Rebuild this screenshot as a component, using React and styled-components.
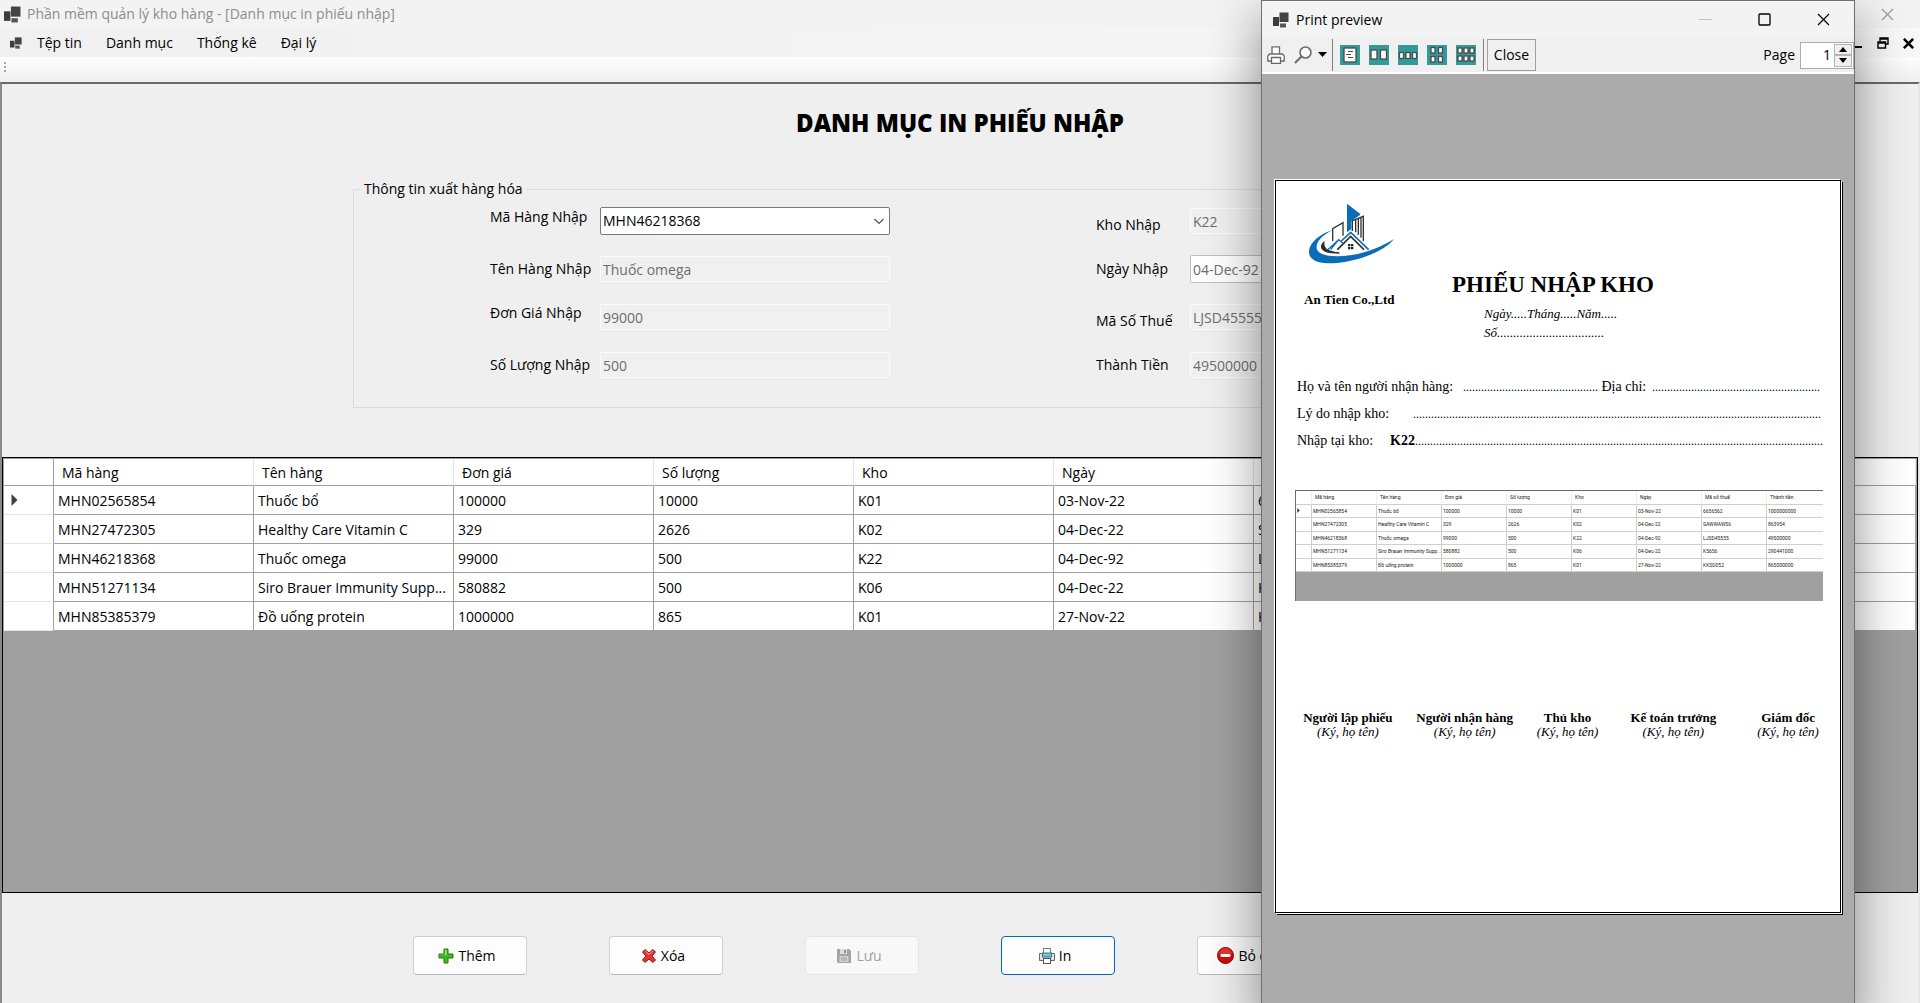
import React from 'react';
import styled, { createGlobalStyle, css } from 'styled-components';

const UI_FONT = '"Open Sans", "Noto Sans", sans-serif';
const DOC_FONT = '"Liberation Serif", "Times New Roman", serif';

const GlobalStyle = createGlobalStyle`
  *, *::before, *::after { box-sizing: border-box; }
  body { margin: 0; background: #f0f0f0; overflow: hidden; }
  button, input, select { font: inherit; color: inherit; margin: 0; }
`;

/* ---------- main window ---------- */

const Desktop = styled.div`
  position: relative;
  height: 100vh;
  overflow: hidden;
  display: flex;
  flex-direction: column;
  background: #efefef;
  color: #000;
  font: 14px/20px ${UI_FONT};
`;

const TitleBar = styled.header`
  flex: none;
  display: flex;
  align-items: center;
  gap: 6px;
  height: 28px;
  padding: 0 26px 0 4px;
  background: #f3f3f3;
  color: #8c8c8c;
`;

const TitleText = styled.span`
  flex: 1;
`;

const MenuBar = styled.nav`
  flex: none;
  display: flex;
  align-items: center;
  height: 29px;
  padding: 1px 6px 0 10px;
  background: linear-gradient(90deg, #f0f0f0, #f8f8f8);
`;

const MenuItems = styled.div`
  flex: 1;
  display: flex;
  gap: 24px;
  padding-left: 15px;
`;

const PlainButton = styled.button`
  display: inline-flex;
  align-items: center;
  justify-content: center;
  padding: 0;
  border: 0;
  background: none;
`;

const MdiControls = styled.div`
  display: flex;
  align-items: center;
  gap: 14px;
`;

const ToolStrip = styled.div`
  flex: none;
  height: 25px;
  padding: 5px 4px;
  background: linear-gradient(#fdfdfd, #f0f0f0);
  border-bottom-right-radius: 4px;
`;

const Grip = styled.div`
  width: 2px;
  height: 11px;
  background: repeating-linear-gradient(#a8a8a8 0 2px, transparent 2px 4px);
`;

const Child = styled.main`
  flex: 1;
  min-height: 0;
  display: flex;
  flex-direction: column;
  border: solid;
  border-width: 2px 2px 0;
  border-color: #696969 #e6e6e6 #e6e6e6 #8a8a8a;
`;

const FormArea = styled.section`
  flex: none;
  display: flex;
  flex-direction: column;
  align-items: center;
  height: 373px;
`;

const Heading = styled.h1`
  margin: 23px 0 40px;
  font-size: 24px;
  line-height: 32px;
  font-weight: 800;
`;

const Group = styled.fieldset`
  display: flex;
  gap: 206px;
  width: 1214px;
  margin: 0;
  padding: 8px 0 28px 136px;
  border: 1px solid #dcdcdc;

  legend {
    margin-left: -130px;
    padding: 0 4px;
  }
`;

const FieldColumn = styled.div`
  display: flex;
  flex-direction: column;
  gap: 20px;
`;

const Field = styled.div`
  display: grid;
  grid-template-columns: ${p => p.$label}px 290px;
  align-items: center;
  height: 28px;

  label { align-self: ${p => p.$align || 'center'}; }
`;

const TextBox = styled.input`
  width: 100%;
  height: 26px;
  padding: 0 2px;
  border: 1px solid #fbfbfb;
  border-radius: 2px;
  background: #f0f0f0;
  color: #6d6d6d;

  ${p => p.$date && css`
    height: 28px;
    background: #fff;
    border-color: #bfbfbf;
  `}
`;

const Combo = styled.div`
  display: grid;
  align-items: center;

  select, svg { grid-area: 1 / 1; }
  svg { justify-self: end; margin-right: 6px; pointer-events: none; }
`;

const Select = styled.select`
  appearance: none;
  width: 100%;
  height: 28px;
  padding: 0 2px;
  border: 1px solid #7a7a7a;
  border-radius: 2px;
  background: #fff;
`;

/* ---------- data grid ---------- */

const GridFrame = styled.section`
  flex: 1;
  min-height: 0;
  padding: 1px;
  border: 1px solid #000;
  background: #a0a0a0;
  overflow: hidden;
`;

const DataTable = styled.table`
  width: 100%;
  table-layout: fixed;
  border-spacing: 0;
  background: #fff;
  text-align: left;

  th, td {
    padding: 2px 4px 0;
    height: 29px;
    border: solid #a0a0a0;
    border-width: 0 1px 1px 0;
    font-weight: 400;
    white-space: nowrap;
    overflow: hidden;
  }
  thead th {
    height: 27px;
    padding: 2px 8px 0;
    border-right-color: #e5e5e5;
  }
  thead th:first-child { border-right-color: #a0a0a0; }
  tbody th { border-bottom-color: #e5e5e5; padding: 0 7px; }
  svg { display: block; }
`;

const ButtonBar = styled.footer`
  flex: none;
  display: flex;
  justify-content: center;
  align-items: flex-start;
  gap: 82px;
  height: 110px;
  padding-top: 43px;
`;

const ActionButton = styled.button`
  display: flex;
  align-items: center;
  justify-content: center;
  gap: 4px;
  width: 114px;
  height: 39px;
  padding: 0 6px 0 0;
  border: 1px solid ${p => (p.$active ? '#0067c0' : '#d0d0d0')};
  border-bottom-color: ${p => (p.$active ? '#0067c0' : '#b8b8b8')};
  border-radius: 4px;
  background: #fdfdfd;

  &:disabled {
    border-color: #e5e5e5;
    background: #f8f8f8;
    color: #a0a0a0;
  }
`;

/* ---------- print preview window ---------- */

const PreviewWindow = styled.section`
  position: absolute;
  top: 0;
  right: 65px;
  bottom: -16px;
  width: 594px;
  display: flex;
  flex-direction: column;
  border: 1px solid #707070;
  background: #f0f0f0;
  box-shadow: 0 18px 50px rgba(0, 0, 0, 0.45);
`;

const PreviewTitle = styled.header`
  flex: none;
  display: flex;
  align-items: center;
  gap: 7px;
  height: 37px;
  padding: 0 24px 0 11px;
  background: #f3f3f3;
`;

const WindowControls = styled.div`
  display: flex;
  align-items: center;
  gap: 46px;
  margin-left: auto;
`;

const PreviewTools = styled.div`
  flex: none;
  display: flex;
  align-items: center;
  height: 36px;
  padding-left: 4px;
  border-bottom: 2px solid #fdfdfd;
`;

const ToolGroup = styled.div`
  display: flex;
  align-items: center;
  gap: ${p => p.$gap}px;
  height: 32px;
  padding: 0 ${p => p.$pad}px;
  border-right: 1px solid #808080;
`;

const CloseButton = styled.button`
  width: 49px;
  height: 32px;
  margin-left: 3px;
  padding: 0;
  border: 1px solid #a0a0a0;
  background: #f0f0f0;
`;

const PageBox = styled.div`
  display: flex;
  align-items: center;
  margin-left: auto;
  gap: 5px;
`;

const Spinner = styled.div`
  display: flex;
  width: 54px;
  height: 27px;
  padding: 1px;
  border: 1px solid #ababb3;
  background: #fff;
`;

const PageInput = styled.input`
  flex: 1;
  min-width: 0;
  padding: 0 3px;
  border: 0;
  text-align: right;
  background: #fff;
`;

const SpinButtons = styled.div`
  display: flex;
  flex-direction: column;
  width: 18px;

  button {
    flex: 1;
    border: 1px solid #b5b5b5;
    background: #f0f0f0;
  }
`;

const PreviewCanvas = styled.div`
  flex: 1;
  display: flex;
  align-items: center;
  justify-content: center;
  background: #ababab;
`;

const Sheet = styled.article`
  width: 566px;
  height: 733px;
  padding: 22px 17px 0 19px;
  border: 1px solid #000;
  background: #fff;
  box-shadow: 1px 1px 0 #fff, -1px -1px 0 #fff, 2px 2px 0 #000;
  font: 14px/16px ${DOC_FONT};
`;

const SheetHead = styled.div`
  display: flex;
  gap: 56px;
  padding-left: 9px;
  height: 176px;
`;

const Company = styled.div`
  width: 92px;
  font-size: 13px;
  font-weight: 700;

  svg { display: block; margin: 0 0 27px 4px; }
`;

const DocTitle = styled.div`
  padding-top: 68px;

  h2 { margin: 0 0 7px; font-size: 23px; line-height: 28px; }
  p { margin: 0 0 3px 32px; font-size: 13px; font-style: italic; }
`;

const DocLine = styled.p`
  display: flex;
  margin: 0 0 11px 2px;
`;

const DocLabel = styled.span`
  flex: none;
  width: ${p => p.$width}px;
  white-space: nowrap;
`;

const Dots = styled.span`
  flex: none;
  font-size: 12px;
`;

const MiniFrame = styled.div`
  margin: 41px 0 110px;
  padding-bottom: 29px;
  border: solid #6b6b6b;
  border-width: 1px 0 0 1px;
  background: #a0a0a0;
  font-family: Roboto, sans-serif;
  color: #222;

  table {
    width: 100%;
    table-layout: fixed;
    border-spacing: 0;
    background: #fff;
    text-align: left;
  }
  th, td {
    height: 13px;
    padding: 0 0 0 1px;
    border: solid #cfcfcf;
    border-width: 0 1px 1px 0;
    font-size: 5px;
    line-height: 8px;
    font-weight: 400;
    white-space: nowrap;
  }
  tbody tr:nth-child(even) > * { height: 14px; }
  thead th { padding: 0 3px; height: 14px; border-right-color: #eee; }
  tr > :last-child { border-right: 0; }
  svg { display: block; }
`;

const Signatures = styled.div`
  display: grid;
  grid-template-columns: 106fr 128fr 78fr 134fr 96fr;
  margin-right: -13px;
  text-align: center;
  font-size: 13px;
  line-height: 14px;

  strong { display: block; white-space: nowrap; }
  em { display: block; }
`;

/* ---------- drawings ---------- */

const AppIcon = ({ size }) => (
  <svg width={size} height={size} viewBox="0 0 16 16" aria-hidden="true">
    <rect x="0" y="5" width="6" height="9" fill="#3c3c3c" />
    <rect x="6.5" y="0.5" width="9" height="9.5" fill="#444" />
    <rect x="7" y="11.5" width="6" height="4" fill="#555" />
  </svg>
);

const CloseGlyph = ({ color, width = 1.2, size = 13 }) => (
  <svg width={size} height={size} viewBox="0 0 13 13" aria-hidden="true">
    <path d="M1 1L12 12M12 1L1 12" stroke={color} strokeWidth={width} fill="none" />
  </svg>
);

const Chevron = () => (
  <svg width="10" height="7" viewBox="0 0 10 7" aria-hidden="true">
    <path d="M.5 1L5 5.5L9.500 1" stroke="#555" strokeWidth="1.200" fill="none" />
  </svg>
);

const RowArrow = ({ w, h }) => (
  <svg width={w} height={h} viewBox="0 0 7 12" aria-hidden="true">
    <path d="M.5 0L6.500 6L.5 12Z" fill="#404040" />
  </svg>
);

const PlusIcon = () => (
  <svg width="16" height="16" viewBox="0 0 16 16" aria-hidden="true">
    <path d="M6 1h4v5h5v4h-5v5H6v-5H1V6h5z" fill="#42b81c" stroke="#237d0c" />
    <path d="M7 2h1.500v5H2.200V6.800H7z" fill="#a7e58d" />
  </svg>
);

const CrossIcon = () => (
  <svg width="16" height="16" viewBox="0 0 16 16" aria-hidden="true">
    <path d="M4 1.500L8 5L12 1.500L14.500 4L11 8L14.500 12L12 14.500L8 11L4 14.500L1.500 12L5 8L1.500 4Z" fill="#e3342f" stroke="#9e1414" />
    <path d="M4 3L8 6.300L12 3" stroke="#f59a92" fill="none" />
  </svg>
);

const SaveIcon = () => (
  <svg width="16" height="16" viewBox="0 0 16 16" aria-hidden="true">
    <path d="M1 1h12l2 2v12H2l-1-1z" fill="#a3a3a3" />
    <rect x="4" y="1" width="7" height="5" fill="#dedede" />
    <rect x="8" y="2" width="2" height="3" fill="#8d8d8d" />
    <rect x="3.500" y="8" width="9" height="6" fill="#d4d4d4" />
    <path d="M5 10h6M5 12h6" stroke="#9a9a9a" />
  </svg>
);

const PrintColorIcon = () => (
  <svg width="16" height="16" viewBox="0 0 16 16" aria-hidden="true">
    <rect x="4.500" y=".5" width="7" height="6" fill="#fff" stroke="#7c7c7c" />
    <path d="M.5 5.500h15v7H.5z" fill="#dfe3e6" stroke="#5f6b73" />
    <rect x="3.500" y="5" width="9" height="4" fill="#6fc0dc" stroke="#41788c" />
    <rect x="4.500" y="10.500" width="7" height="5" fill="#fff" stroke="#555" />
  </svg>
);

const StopIcon = () => (
  <svg width="17" height="17" viewBox="0 0 17 17" aria-hidden="true">
    <circle cx="8.500" cy="8.500" r="8" fill="#d10e0a" stroke="#930500" />
    <path d="M2 7a6.500 6 0 0 1 13 0z" fill="#f0504a" opacity=".6" />
    <rect x="3.500" y="7" width="10" height="3" rx="1" fill="#fff" />
  </svg>
);

const PrinterIcon = () => (
  <svg width="18" height="18" viewBox="0 0 18 18" fill="#fff" stroke="#6a6a6a" strokeWidth="1.300" aria-hidden="true">
    <path d="M5 8V.8h7.500V8" />
    <path d="M2.500 8h13l1.700 2v5H.8v-5z" />
    <path d="M4.500 11.500h9v5.800h-9z" />
  </svg>
);

const Magnifier = () => (
  <svg width="18" height="18" viewBox="0 0 18 18" fill="none" stroke="#6a6a6a" aria-hidden="true">
    <circle cx="11.500" cy="6.500" r="5.500" strokeWidth="1.600" fill="#fafafa" />
    <path d="M7.500 10.500L1 17" strokeWidth="2" />
  </svg>
);

const layouts = {
  'One page': [[4, 3, 12, 14]],
  'Two pages': [[2, 5, 6, 9], [11.5, 5, 6, 9]],
  'Three pages': [[1.5, 7.5, 4, 6], [8, 7.5, 4, 6], [14.5, 7.5, 4, 6]],
  'Four pages': [[4, 2.5, 4, 5.5], [11.5, 2.5, 4, 5.5], [4, 11.5, 4, 5.5], [11.5, 11.5, 4, 5.5]],
  'Six pages': [[2, 3, 4, 5], [8, 3, 4, 5], [14, 3, 4, 5], [2, 11, 4, 5], [8, 11, 4, 5], [14, 11, 4, 5]],
};

const LayoutIcon = ({ pages }) => (
  <svg width="20" height="20" viewBox="0 0 20 20" aria-hidden="true">
    <rect width="20" height="20" fill="#339999" />
    {pages.map(([x, y, w, h]) => (
      <rect key={`${x}-${y}`} x={x} y={y} width={w} height={h} fill="#fff" stroke="#4a4a4a" strokeWidth="1.300" />
    ))}
    {pages.length === 1 && <path d="M8 6.500h5M6 9.500h5M8 12.500h5" stroke="#4a4a4a" strokeWidth="1.200" />}
  </svg>
);

const Logo = () => (
  <svg width="88" height="62" viewBox="24 24 264 186" aria-hidden="true">
    <path d="M282 132C248 176 150 206 84 205C40 204 20 186 29 158C40 132 66 116 97 105C62 124 48 142 50 160C54 182 96 188 150 181C202 174 246 154 282 132Z" fill="#0b6cb8" />
    <path d="M72 140C54 158 66 176 118 174C84 170 68 160 72 140Z" fill="#2a2a2a" stroke="#2a2a2a" strokeWidth="3" />
    <path d="M141 26L180 56V60L154 78V102L141 112Z" fill="#0b6cb8" />
    <path d="M98 138V101L129 83V122" fill="none" stroke="#333" strokeWidth="4" />
    <path d="M157 108V77L190 64V138M167 74V112M175 71V120M183 68V128" fill="none" stroke="#333" strokeWidth="4" />
    <path d="M82 166L116 134L128 144M116 134L92 164" fill="none" stroke="#0b6cb8" strokeWidth="4" />
    <path d="M124 138L152 112L206 164" fill="none" stroke="#0b6cb8" strokeWidth="5" />
    <path d="M112 164L152 124L192 164" fill="none" stroke="#333" strokeWidth="5" />
    <path d="M144 147h7v7h-7zM153 147h7v7h-7zM144 156h7v7h-7zM153 156h7v7h-7z" fill="#222" />
  </svg>
);

/* ---------- data ---------- */

const columns = ['Mã hàng', 'Tên hàng', 'Đơn giá', 'Số lượng', 'Kho', 'Ngày', 'Mã số thuế', 'Thành tiền'];
const rows = [
  ['MHN02565854', 'Thuốc bổ', '100000', '10000', 'K01', '03-Nov-22', '6656562', '1000000000'],
  ['MHN27472305', 'Healthy Care Vitamin C', '329', '2626', 'K02', '04-Dec-22', 'SAWWAW56', '863954'],
  ['MHN46218368', 'Thuốc omega', '99000', '500', 'K22', '04-Dec-92', 'LJSD45555', '49500000'],
  ['MHN51271134', 'Siro Brauer Immunity Supp...', '580882', '500', 'K06', '04-Dec-22', 'K5656', '290441000'],
  ['MHN85385379', 'Đồ uống protein', '1000000', '865', 'K01', '27-Nov-22', 'KKSD052', '865000000'],
];

const leftFields = [
  { id: 'ten', label: 'Tên Hàng Nhập', value: 'Thuốc omega' },
  { id: 'gia', label: 'Đơn Giá Nhập', value: '99000', align: 'start' },
  { id: 'sl', label: 'Số Lượng Nhập', value: '500' },
];
const rightFields = [
  { id: 'kho', label: 'Kho Nhập', value: 'K22', align: 'end' },
  { id: 'ngay', label: 'Ngày Nhập', value: '04-Dec-92', date: true },
  { id: 'thue', label: 'Mã Số Thuế', value: 'LJSD45555', align: 'end' },
  { id: 'tien', label: 'Thành Tiền', value: '49500000' },
];

const actions = [
  { label: 'Thêm', icon: <PlusIcon /> },
  { label: 'Xóa', icon: <CrossIcon /> },
  { label: 'Lưu', icon: <SaveIcon />, disabled: true },
  { label: 'In', icon: <PrintColorIcon />, active: true },
  { label: 'Bỏ qua', icon: <StopIcon /> },
  { label: 'Thoát', icon: <CrossIcon /> },
];

const signers = ['Người lập phiếu', 'Người nhận hàng', 'Thủ kho', 'Kế toán trưởng', 'Giám đốc'];
const dots = n => '.'.repeat(n);

/* ---------- parts ---------- */

const StockRows = ({ arrow }) => (
  <>
    <thead>
      <tr>
        <th aria-label="Row" />
        {columns.map(c => <th key={c} scope="col">{c}</th>)}
      </tr>
    </thead>
    <tbody>
      {rows.map((r, i) => (
        <tr key={r[0]}>
          <th scope="row">{i === 0 && arrow}</th>
          {r.map((v, j) => <td key={columns[j]}>{v}</td>)}
        </tr>
      ))}
    </tbody>
  </>
);

const LabeledField = ({ field, width }) => (
  <Field $label={width} $align={field.align}>
    <label htmlFor={field.id}>{field.label}</label>
    <TextBox id={field.id} defaultValue={field.value} $date={field.date} disabled />
  </Field>
);

const PrintPreview = () => (
  <PreviewWindow aria-label="Print preview">
    <PreviewTitle>
      <AppIcon size={16} />
      <span>Print preview</span>
      <WindowControls>
        <PlainButton aria-label="Minimize">
          <svg width="13" height="13" viewBox="0 0 13 13"><path d="M0 6.500h13" stroke="#c4c4c4" /></svg>
        </PlainButton>
        <PlainButton aria-label="Maximize">
          <svg width="13" height="13" viewBox="0 0 13 13">
            <rect x="1" y="1" width="11" height="11" rx="1" fill="none" stroke="#000" strokeWidth="1.300" />
          </svg>
        </PlainButton>
        <PlainButton aria-label="Close window"><CloseGlyph color="#000" /></PlainButton>
      </WindowControls>
    </PreviewTitle>
    <PreviewTools>
      <ToolGroup $gap={9} $pad={1}>
        <PlainButton aria-label="Print"><PrinterIcon /></PlainButton>
        <PlainButton aria-label="Zoom">
          <Magnifier />
          <svg width="19" height="6" viewBox="0 0 19 6"><path d="M6 0h9L10.500 5z" /></svg>
        </PlainButton>
      </ToolGroup>
      <ToolGroup $gap={9} $pad={7}>
        {Object.entries(layouts).map(([name, pages]) => (
          <PlainButton key={name} aria-label={name}><LayoutIcon pages={pages} /></PlainButton>
        ))}
      </ToolGroup>
      <CloseButton>Close</CloseButton>
      <PageBox>
        <label htmlFor="page">Page</label>
        <Spinner>
          <PageInput id="page" inputMode="numeric" defaultValue="1" />
          <SpinButtons>
            <PlainButton aria-label="Next page"><svg width="8" height="5"><path d="M0 5h8L4 0z" /></svg></PlainButton>
            <PlainButton aria-label="Previous page"><svg width="8" height="5"><path d="M0 0h8L4 5z" /></svg></PlainButton>
          </SpinButtons>
        </Spinner>
      </PageBox>
    </PreviewTools>
    <PreviewCanvas>
      <Sheet>
        <SheetHead>
          <Company><Logo />An Tien Co.,Ltd</Company>
          <DocTitle>
            <h2>PHIẾU NHẬP KHO</h2>
            <p>Ngày.....Tháng.....Năm.....</p>
            <p>Số{dots(33)}</p>
          </DocTitle>
        </SheetHead>
        <DocLine>
          <DocLabel $width={166}>Họ và tên người nhận hàng:</DocLabel>
          <Dots>{dots(45)}</Dots>
          <DocLabel $width={54}>&nbsp;Địa chỉ:</DocLabel>
          <Dots>{dots(56)}</Dots>
        </DocLine>
        <DocLine>
          <DocLabel $width={116}>Lý do nhập kho:</DocLabel>
          <Dots>{dots(136)}</Dots>
        </DocLine>
        <DocLine>
          <DocLabel $width={93}>Nhập tại kho:</DocLabel>
          <strong>K22</strong>
          <Dots>{dots(136)}</Dots>
        </DocLine>
        <MiniFrame>
          <table>
            <colgroup>
              <col width="16" />
              {columns.slice(0, 7).map(c => <col key={c} width="65" />)}
              <col />
            </colgroup>
            <StockRows arrow={<RowArrow w={3} h={5} />} />
          </table>
        </MiniFrame>
        <Signatures>
          {signers.map(s => (
            <div key={s}><strong>{s}</strong><em>(Ký, họ tên)</em></div>
          ))}
        </Signatures>
      </Sheet>
    </PreviewCanvas>
  </PreviewWindow>
);

export default function App() {
  return (
    <Desktop>
      <GlobalStyle />
      <TitleBar>
        <AppIcon size={17} />
        <TitleText>Phần mềm quản lý kho hàng - [Danh mục in phiếu nhập]</TitleText>
        <PlainButton aria-label="Close application"><CloseGlyph color="#9a9a9a" /></PlainButton>
      </TitleBar>
      <MenuBar>
        <AppIcon size={12} />
        <MenuItems>
          {['Tệp tin', 'Danh mục', 'Thống kê', 'Đại lý'].map(m => <PlainButton key={m}>{m}</PlainButton>)}
        </MenuItems>
        <MdiControls>
          <PlainButton aria-label="Minimize document">
            <svg width="9" height="12" viewBox="0 0 9 12"><path d="M0 10h8" stroke="#000" strokeWidth="2" /></svg>
          </PlainButton>
          <PlainButton aria-label="Restore document">
            <svg width="12" height="12" viewBox="0 0 12 12" fill="none" stroke="#000">
              <path d="M3 4V1h8v6H9M3 2h8" strokeWidth="1.400" />
              <path d="M1 5h7.500v6H1zM1 6h7.500" strokeWidth="1.400" />
            </svg>
          </PlainButton>
          <PlainButton aria-label="Close document"><CloseGlyph color="#000" width={3} size={11} /></PlainButton>
        </MdiControls>
      </MenuBar>
      <ToolStrip><Grip /></ToolStrip>
      <Child>
        <FormArea>
          <Heading>DANH MỤC IN PHIẾU NHẬP</Heading>
          <Group>
            <legend>Thông tin xuất hàng hóa</legend>
            <FieldColumn>
              <Field $label={110} $align="start">
                <label htmlFor="ma">Mã Hàng Nhập</label>
                <Combo>
                  <Select id="ma" defaultValue="MHN46218368">
                    {rows.map(r => <option key={r[0]}>{r[0]}</option>)}
                  </Select>
                  <Chevron />
                </Combo>
              </Field>
              {leftFields.map(f => <LabeledField key={f.id} field={f} width={110} />)}
            </FieldColumn>
            <FieldColumn>
              {rightFields.map(f => <LabeledField key={f.id} field={f} width={94} />)}
            </FieldColumn>
          </Group>
        </FormArea>
        <GridFrame>
          <DataTable>
            <colgroup>
              <col width="50" />
              {columns.slice(0, 7).map(c => <col key={c} width="200" />)}
              <col />
            </colgroup>
            <StockRows arrow={<RowArrow w={7} h={12} />} />
          </DataTable>
        </GridFrame>
        <ButtonBar>
          {actions.map(a => (
            <ActionButton key={a.label} $active={a.active} disabled={a.disabled}>
              {a.icon}
              <span>{a.label}</span>
            </ActionButton>
          ))}
        </ButtonBar>
      </Child>
      <PrintPreview />
    </Desktop>
  );
}
